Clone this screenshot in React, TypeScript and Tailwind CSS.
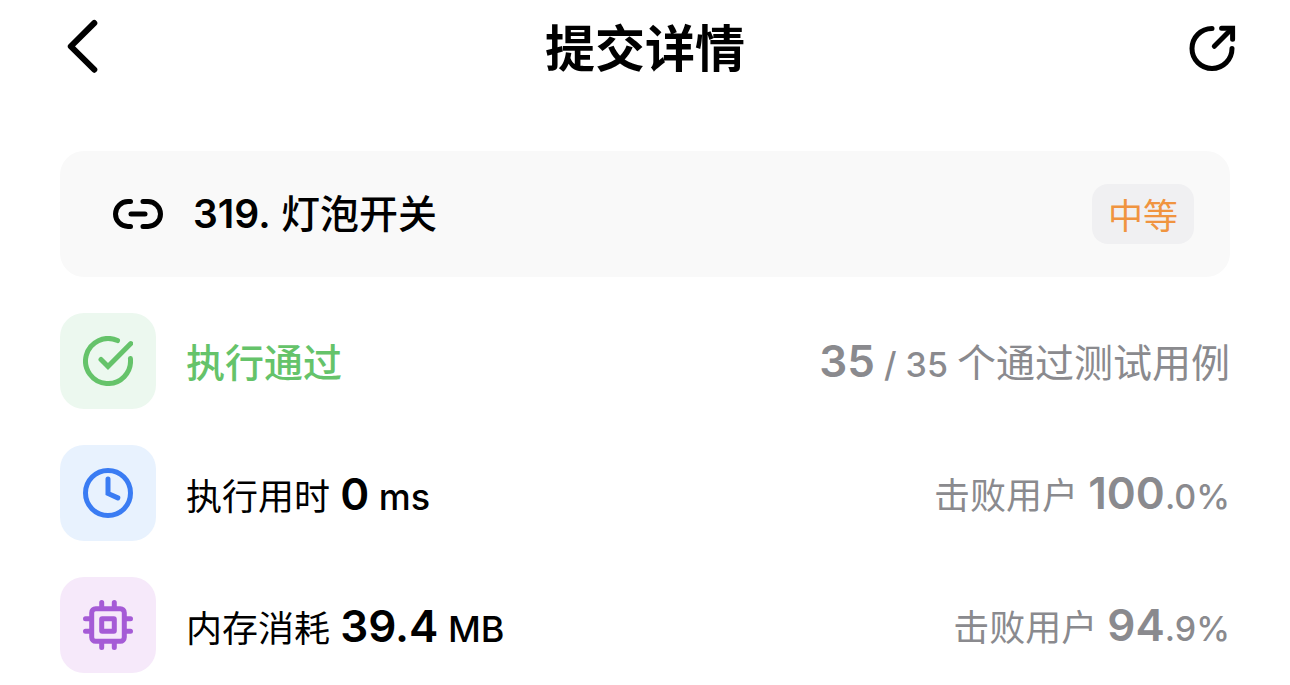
import React from 'react';

interface Stat {
  label: string;
  value: string;
  unit: string;
  beats: string;
  beatsDecimal: string;
  tile: string;
  icon: React.ReactNode;
}

const BackIcon = () => (
  <svg width="50" height="60" viewBox="0 0 50 60" fill="none" stroke="currentColor" strokeWidth="6" strokeLinecap="round" strokeLinejoin="round">
    <path d="M42.3 7 18.8 30.3l23.5 23.4" />
  </svg>
);

const ShareIcon = () => (
  <svg width="50" height="50" viewBox="0 0 50 50" fill="none" stroke="currentColor" strokeWidth="5" strokeLinecap="round">
    <path d="M24 5.5a20 20 0 1 0 20 20" />
    <path d="M26.3 23.3 44 5.6" />
    <path d="M33.6 5.2h11v11" />
  </svg>
);

const LinkIcon = () => (
  <svg width="50" height="50" viewBox="0 0 50 50" fill="none" stroke="currentColor" strokeWidth="5" strokeLinecap="round">
    <path d="M17.5 12.5h-2.5a12.5 12.5 0 0 0 0 25h2.5" />
    <path d="M30 12.5h5a12.5 12.5 0 0 1 0 25h-5" />
    <path d="M18 25h14" />
  </svg>
);

const PassedIcon = () => (
  <svg width="50" height="50" viewBox="0 0 50 50" fill="none" stroke="currentColor" strokeWidth="5" strokeLinecap="round">
    <path d="M34.5 4.6A22.5 22.5 0 1 0 47.4 22.6" />
    <path d="M18 23.5 25 30.5 47.8 7.6" />
  </svg>
);

const ClockIcon = () => (
  <svg width="50" height="50" viewBox="0 0 50 50" fill="none" stroke="currentColor" strokeWidth="5" strokeLinecap="round">
    <circle cx="25" cy="25" r="22.5" />
    <path d="M25 11v14.5l9.8 4.4" />
  </svg>
);

const ChipIcon = () => (
  <svg width="50" height="50" viewBox="0 0 50 50" fill="none" stroke="currentColor" strokeWidth="5" strokeLinecap="round">
    <rect x="8.7" y="8.7" width="32.6" height="32.6" rx="4" />
    <rect x="18.7" y="18.7" width="12.6" height="12.6" rx="0.5" />
    <path d="M18.7 2.5v5M31.3 2.5v5M18.7 42.5v5M31.3 42.5v5" />
    <path d="M2.5 18.7h5M2.5 31.3h5M42.5 18.7h5M42.5 31.3h5" />
  </svg>
);

const stats: Stat[] = [
  {
    label: '执行用时',
    value: '0',
    unit: 'ms',
    beats: '100',
    beatsDecimal: '.0%',
    tile: 'bg-[#e8f2fe] text-[#3a7cf3]',
    icon: <ClockIcon />,
  },
  {
    label: '内存消耗',
    value: '39.4',
    unit: 'MB',
    beats: '94',
    beatsDecimal: '.9%',
    tile: 'bg-[#f6e9fa] text-[#a55bd6]',
    icon: <ChipIcon />,
  },
];

const Tile: React.FC<{ className: string; children: React.ReactNode }> = ({ className, children }) => (
  <div className={`flex size-24 shrink-0 items-center justify-center rounded-3xl ${className}`}>{children}</div>
);

const App: React.FC = () => {
  return (
    <div className="w-full bg-white font-['Inter','Noto_Sans_CJK_SC',sans-serif] text-black" lang="zh-CN">
      <header className="grid h-24 grid-cols-[1fr_auto_1fr] items-center px-[52px]">
        <button type="button" aria-label="返回" className="-mt-1 justify-self-start">
          <BackIcon />
        </button>
        <h1 className="pt-0.5 text-[50px] leading-[60px] font-bold">提交详情</h1>
        <button type="button" aria-label="分享" className="justify-self-end">
          <ShareIcon />
        </button>
      </header>

      <main className="mt-[55px] flex flex-col gap-9 px-[60px] pb-3">
        {/* Problem */}
        <a href="#problem" className="flex h-[126px] items-center rounded-3xl bg-[#f9f9f9] pr-9 pl-[53px]">
          <LinkIcon />
          <span className="ml-[30px] text-[39px] leading-[60px] font-medium">
            <span className="font-semibold">319.</span> 灯泡开关
          </span>
          <span className="ml-auto rounded-2xl bg-[#f0f0f2] px-4 pt-1 text-[35px] leading-[56px] text-[#f09440]">中等</span>
        </a>

        {/* Result */}
        <div className="flex items-center">
          <Tile className="bg-[#ecf8ef] text-[#65c36a]">
            <PassedIcon />
          </Tile>
          <p className="ml-[30px] pt-1 text-[39px] leading-[60px] font-medium text-[#65c36a]">执行通过</p>
          <p className="ml-auto pt-1 text-[39px] leading-[60px] text-[#8a8a8e]">
            <span className="text-[44px] font-semibold">35</span>
            <span className="text-[34px] font-medium"> / 35 </span>
            个通过测试用例
          </p>
        </div>

        {/* Runtime and memory */}
        {stats.map((stat) => (
          <div key={stat.label} className="flex items-center">
            <Tile className={stat.tile}>{stat.icon}</Tile>
            <p className="ml-[30px] pt-1 text-[36px] leading-[60px]">
              {stat.label} <span className="text-[44px] font-semibold">{stat.value}</span>
              <span className="font-medium"> {stat.unit}</span>
            </p>
            <p className="ml-auto pt-1 text-[36px] leading-[60px] text-[#8a8a8e]">
              击败用户 <span className="text-[44px] font-semibold">{stat.beats}</span>
              <span className="text-[34px] font-medium">{stat.beatsDecimal}</span>
            </p>
          </div>
        ))}
      </main>
    </div>
  );
};

export default App;
